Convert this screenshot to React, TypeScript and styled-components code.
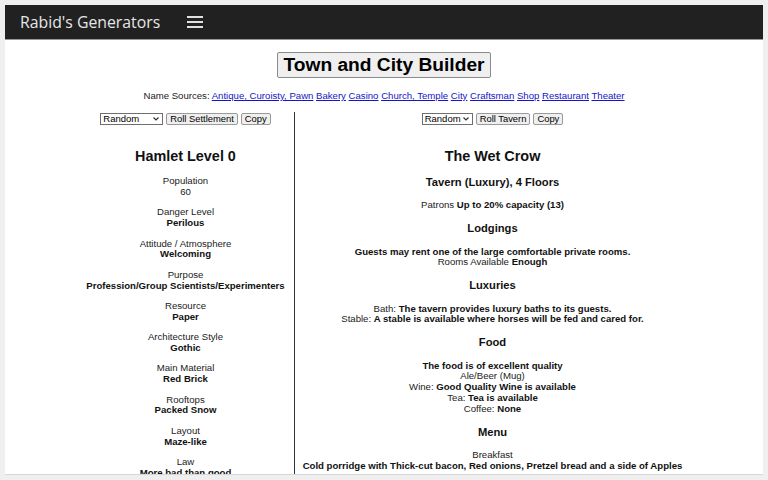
import React from 'react';
import styled, { createGlobalStyle } from 'styled-components';

const GlobalStyle = createGlobalStyle`
  html, body {
    background: #efefef;
  }
  body {
    margin: 5px;
    overflow: hidden;
    font-family: "Liberation Sans", Arial, sans-serif;
    color: #111;
  }
`;

const NavBar = styled.nav`
  display: flex;
  align-items: center;
  gap: 27px;
  height: 34px;
  padding: 0 15px;
  background: #212121;
  border-bottom: 1px solid #9a9a9a;
`;

const Brand = styled.span`
  font-family: "Open Sans", sans-serif;
  font-size: 15.8px;
  color: #e6e6e6;
`;

const MenuIcon = styled.span`
  display: flex;
  width: 16px;
  height: 12px;
  color: #e0e0e0;
`;

const Main = styled.main`
  height: 434px;
  overflow: hidden;
  background: #fff;
  border-bottom: 1px solid #d6d6d6;
  box-shadow: 1px 0 1px rgba(0, 0, 0, 0.06);
`;

const TitleRow = styled.div`
  display: flex;
  justify-content: center;
  padding-top: 12px;
  margin-bottom: 13px;
`;

const TitleButton = styled.button`
  font-family: "Liberation Sans", Arial, sans-serif;
  font-size: 19.2px;
  font-weight: bold;
  line-height: 22px;
  padding: 1px 5px;
  color: #000;
  background: #efefef;
  border: 1px solid #8a8a8a;
  border-radius: 2px;
`;

const Sources = styled.p`
  margin: 0 0 10px;
  text-align: center;
  font-size: 9.6px;
  line-height: 10.8px;
  color: #222;

  a {
    color: #1515c8;
    text-decoration: underline;
  }
`;

const Columns = styled.div`
  display: flex;
  justify-content: center;
`;

const Column = styled.section<{ $width: number; $divider?: boolean }>`
  width: ${p => p.$width}px;
  border-left: ${p => (p.$divider ? '1px solid #333' : 'none')};
  text-align: center;
  font-size: 9.6px;
  line-height: 10.8px;
  color: #222;
`;

const Controls = styled.div`
  display: flex;
  justify-content: center;
  gap: 3px;
  padding: 1px 0 11px;
`;

const SelectWrap = styled.span`
  position: relative;
  display: inline-flex;
`;

const Select = styled.select<{ $width: number }>`
  appearance: none;
  width: ${p => p.$width}px;
  height: 12px;
  margin: 0;
  padding: 0 0 0 2px;
  font-family: "Liberation Sans", Arial, sans-serif;
  font-size: 9.5px;
  line-height: 10px;
  color: #000;
  background: #fff;
  border: 1px solid #6f6f6f;
  border-radius: 0;
`;

const Chevron = styled.svg`
  position: absolute;
  right: 4px;
  top: 4px;
  pointer-events: none;
`;

const SmallButton = styled.button`
  height: 12px;
  padding: 0 3px;
  font-family: "Liberation Sans", Arial, sans-serif;
  font-size: 9.4px;
  line-height: 10px;
  color: #000;
  background: #efefef;
  border: 1px solid #9a9a9a;
  border-radius: 2px;
`;

const Heading = styled.h2`
  margin: 12px 0;
  font-size: 14.4px;
  line-height: 16.5px;
  font-weight: bold;
  color: #111;
`;

const SubHeading = styled.h3`
  margin: 11.2px 0;
  font-size: 11.2px;
  line-height: 13px;
  font-weight: bold;
  color: #111;
`;

const Para = styled.p`
  margin: 9.6px 0;

  b {
    color: #111;
  }
`;

const stats: [string, string, boolean][] = [
  ['Population', '60', false],
  ['Danger Level', 'Perilous', true],
  ['Attitude / Atmosphere', 'Welcoming', true],
  ['Purpose', 'Profession/Group Scientists/Experimenters', true],
  ['Resource', 'Paper', true],
  ['Architecture Style', 'Gothic', true],
  ['Main Material', 'Red Brick', true],
  ['Rooftops', 'Packed Snow', true],
  ['Layout', 'Maze-like', true],
  ['Law', 'More bad than good', true],
];

const sources = [
  'Antique, Curoisty, Pawn',
  'Bakery',
  'Casino',
  'Church, Temple',
  'City',
  'Craftsman',
  'Shop',
  'Restaurant',
  'Theater',
];

const Dropdown: React.FC<{ width: number; options: string[] }> = ({ width, options }) => (
  <SelectWrap>
    <Select $width={width} defaultValue={options[0]}>
      {options.map(o => (
        <option key={o}>{o}</option>
      ))}
    </Select>
    <Chevron width="6" height="4" viewBox="0 0 6 4" fill="none" stroke="#333" strokeWidth="1.2">
      <polyline points="0.5,0.5 3,3 5.5,0.5" />
    </Chevron>
  </SelectWrap>
);

const App: React.FC = () => {
  return (
    <>
      <GlobalStyle />
      <NavBar>
        <Brand>Rabid's Generators</Brand>
        <MenuIcon>
          <svg width="16" height="12" viewBox="0 0 16 12" fill="currentColor">
            <rect x="0" y="0" width="16" height="2" />
            <rect x="0" y="5" width="16" height="2" />
            <rect x="0" y="10" width="16" height="2" />
          </svg>
        </MenuIcon>
      </NavBar>
      <Main>
        <TitleRow>
          <TitleButton>Town and City Builder</TitleButton>
        </TitleRow>
        <Sources>
          Name Sources:{' '}
          {sources.map((s, i) => (
            <React.Fragment key={s}>
              <a href="#">{s}</a>
              {i < sources.length - 1 ? ' ' : ''}
            </React.Fragment>
          ))}
        </Sources>
        <Columns>
          <Column $width={216}>
            <Controls>
              <Dropdown width={63} options={['Random', 'Thorp', 'Hamlet', 'Village', 'Small Town']} />
              <SmallButton>Roll Settlement</SmallButton>
              <SmallButton>Copy</SmallButton>
            </Controls>
            <Heading>Hamlet Level 0</Heading>
            {stats.map(([label, value, bold]) => (
              <Para key={label}>
                {label}
                <br />
                {bold ? <b>{value}</b> : value}
              </Para>
            ))}
          </Column>
          <Column $width={396} $divider>
            <Controls>
              <Dropdown width={51} options={['Random', 'Poor', 'Luxury']} />
              <SmallButton>Roll Tavern</SmallButton>
              <SmallButton>Copy</SmallButton>
            </Controls>
            <Heading>The Wet Crow</Heading>
            <SubHeading>Tavern (Luxury), 4 Floors</SubHeading>
            <Para>
              Patrons <b>Up to 20% capacity (13)</b>
            </Para>
            <SubHeading>Lodgings</SubHeading>
            <Para>
              <b>Guests may rent one of the large comfortable private rooms.</b>
              <br />
              Rooms Available <b>Enough</b>
            </Para>
            <SubHeading>Luxuries</SubHeading>
            <Para>
              Bath: <b>The tavern provides luxury baths to its guests.</b>
              <br />
              Stable: <b>A stable is available where horses will be fed and cared for.</b>
            </Para>
            <SubHeading>Food</SubHeading>
            <Para>
              <b>The food is of excellent quality</b>
              <br />
              Ale/Beer (Mug)
              <br />
              Wine: <b>Good Quality Wine is available</b>
              <br />
              Tea: <b>Tea is available</b>
              <br />
              Coffee: <b>None</b>
            </Para>
            <SubHeading>Menu</SubHeading>
            <Para>
              Breakfast
              <br />
              <b>Cold porridge with Thick-cut bacon, Red onions, Pretzel bread and a side of Apples</b>
            </Para>
          </Column>
        </Columns>
      </Main>
    </>
  );
};

export default App;
